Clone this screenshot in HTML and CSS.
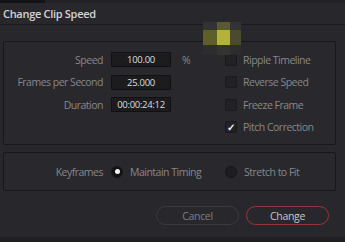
FILE: index.html
```html
<!DOCTYPE html>
<html lang="en">
<head>
    <meta charset="UTF-8">
    <title>Change Clip Speed</title>
    <link rel="stylesheet" href="styles.css">
</head>
<body>
    <div class="dialog">
        <div class="top-strip"><span class="top-dark"></span></div>
        <div class="title-bar">Change Clip Speed</div>

        <div class="panel speed-panel">
            <label class="field-label">Speed</label>
            <div class="field-cell"><input class="field-input" type="text" value="100.00"></div>
            <span class="unit">%</span>
            <label class="check"><span class="box"></span>Ripple Timeline</label>

            <label class="field-label">Frames per Second</label>
            <div class="field-cell"><input class="field-input" type="text" value="25.000"></div>
            <span class="unit"></span>
            <label class="check"><span class="box"></span>Reverse Speed</label>

            <label class="field-label">Duration</label>
            <div class="field-cell"><input class="field-input" type="text" value="00:00:24:12"></div>
            <span class="unit"></span>
            <label class="check"><span class="box"></span>Freeze Frame</label>

            <span></span>
            <span></span>
            <span></span>
            <label class="check"><span class="box checked">&#10003;</span>Pitch Correction</label>
        </div>

        <div class="panel keyframe-panel">
            <span class="field-label">Keyframes</span>
            <label class="radio"><span class="dot selected"></span>Maintain Timing</label>
            <label class="radio"><span class="dot"></span>Stretch to Fit</label>
        </div>

        <div class="actions">
            <button class="btn">Cancel</button>
            <button class="btn primary">Change</button>
        </div>
        <div class="bottom-strip"></div>

        <!-- pixelated cursor smear over the title bar -->
        <div class="smear">
            <span class="px c1"></span><span class="px c5"></span><span class="px c1"></span>
            <span class="px c3"></span><span class="px c4"></span><span class="px c2"></span>
            <span class="px c0"></span><span class="px c1"></span><span class="px c0"></span>
        </div>
    </div>
</body>
</html>
```

FILE: styles.css
```css
* {
    box-sizing: border-box;
    margin: 0;
    padding: 0;
}

body {
    background-color: #28282c;
    font-family: 'Open Sans', 'Noto Sans', sans-serif;
    width: 345px;
    height: 242px;
    overflow: hidden;
}

.dialog {
    position: relative;
    height: 242px;
    display: flex;
    flex-direction: column;
}

.top-strip {
    height: 3px;
    background-color: #222225;
}

.top-dark {
    display: block;
    width: 45px;
    height: 3px;
    background-color: #131315;
}

.title-bar {
    height: 22px;
    padding-left: 3px;
    line-height: 21px;
    font-size: 11px;
    font-weight: 600;
    letter-spacing: -0.3px;
    color: #d4d4d6;
    border-bottom: 1px solid #1b1b1e;
}

.panel {
    margin: 0 9px 0 3px;
    border: 1px solid #18181b;
    border-radius: 2px;
    background-color: #29292d;
}

.speed-panel {
    margin-top: 16px;
    height: 104px;
    padding-top: 10px;
    display: grid;
    grid-template-columns: 99px 68px 54px auto;
    grid-auto-rows: 15px;
    row-gap: 7.5px;
    align-items: center;
}

.field-label {
    text-align: right;
    font-size: 10.5px;
    letter-spacing: -0.5px;
    color: #87878b;
}

.field-cell {
    padding-left: 8px;
}

.field-input {
    display: block;
    width: 60px;
    height: 15px;
    background-color: #1c1c1f;
    border: 1px solid #111113;
    border-radius: 1px;
    color: #dcdcde;
    font-family: inherit;
    font-size: 9.5px;
    letter-spacing: -0.3px;
    text-align: center;
    outline: none;
}

.unit {
    padding-left: 11px;
    font-size: 10.5px;
    color: #87878b;
}

.check,
.radio {
    display: flex;
    align-items: center;
    font-size: 10.5px;
    letter-spacing: -0.5px;
    color: #87878b;
}

.box {
    width: 12px;
    height: 12px;
    margin-right: 6px;
    background-color: #222226;
    border: 1px solid #1a1a1c;
    border-radius: 2px;
    color: #f2f2f2;
    font-size: 10px;
    font-weight: 700;
    line-height: 10px;
    text-align: center;
    letter-spacing: 0;
}

.keyframe-panel {
    margin-top: 7px;
    height: 39px;
    display: grid;
    grid-template-columns: 99px 122px auto;
    align-items: center;
}

.keyframe-panel .radio {
    padding-left: 8px;
}

.keyframe-panel .radio + .radio {
    padding-left: 0;
}

.dot {
    position: relative;
    width: 12px;
    height: 12px;
    margin-right: 7px;
    border-radius: 50%;
    background-color: #1e1e21;
    border: 1px solid #161618;
}

.dot.selected {
    background-color: #131315;
}

.dot.selected::after {
    content: "";
    position: absolute;
    left: 2.5px;
    top: 2.5px;
    width: 5px;
    height: 5px;
    border-radius: 50%;
    background-color: #f4f4f4;
}

.actions {
    display: flex;
    justify-content: flex-end;
    gap: 7px;
    margin-top: 15px;
    padding-right: 16px;
}

.btn {
    width: 83px;
    height: 19px;
    border-radius: 10px;
    background-color: #28282c;
    border: 1px solid #3a3a3f;
    color: #7e7e82;
    font-family: inherit;
    font-size: 10.5px;
    letter-spacing: -0.3px;
}

.btn.primary {
    border-color: #93363a;
    color: #c6c6c8;
}

.bottom-strip {
    margin-top: auto;
    height: 5px;
    background-color: #1f1f22;
}

.smear {
    position: absolute;
    left: 203px;
    top: 22px;
    display: grid;
    grid-template-columns: 14px 13px 11px;
    grid-template-rows: 8px 15px 10px;
}

.c0 { background-color: rgba(50, 50, 50, 0.5); }
.c1 { background-color: #333331; }
.c2 { background-color: #4a4a2e; }
.c3 { background-color: #5e5e2a; }
.c4 { background-color: #b3b33a; }
.c5 { background-color: #5a5a2e; }
```
